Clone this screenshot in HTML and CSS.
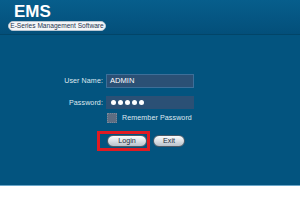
FILE: index.html
```html
<!DOCTYPE html>
<html>
<head>
<meta charset="utf-8">
<link rel="stylesheet" href="styles.css">
</head>
<body>
<div class="main">
  <div class="header">
    <div class="logo">EMS</div>
    <div class="pill">E-Series Management Software</div>
  </div>
  <div class="form">
    <label class="lbl">User Name:</label>
    <div class="field">ADMIN</div>
    <label class="lbl">Password:</label>
    <div class="field dots"><span></span><span></span><span></span><span></span><span></span></div>
  </div>
  <div class="remember"><span class="check"></span><span>Remember Password</span></div>
  <div class="buttons">
    <div class="hl"><div class="btn">Login</div></div>
    <div class="btn exit">Exit</div>
  </div>
</div>
</body>
</html>
```

FILE: styles.css
```css
html, body {
  margin: 0;
  padding: 0;
  background: #ffffff;
  font-family: "Liberation Sans", Arial, sans-serif;
}
.main {
  width: 300px;
  height: 185px;
  background: #03547f;
  border-bottom: 1px solid #6aa6c8;
}
.header {
  height: 35px;
  box-sizing: border-box;
  padding: 4px 0 0 8px;
  background: linear-gradient(#075e8c, #034f7a);
  border-bottom: 1px solid #024568;
}
.logo {
  color: #ffffff;
  font-weight: bold;
  font-size: 17px;
  line-height: 16px;
  margin-left: 6px;
  height: 16px;
}
.pill {
  margin-top: 1px;
  width: 98px;
  height: 10px;
  box-sizing: border-box;
  background: #f4f6f8;
  border: 1px solid #b8c6d2;
  border-radius: 5px;
  color: #1e3550;
  font-size: 6.6px;
  line-height: 8px;
  text-align: center;
  white-space: nowrap;
}
.form {
  display: grid;
  grid-template-columns: 103px 88px;
  grid-template-rows: 14px 13px;
  column-gap: 3px;
  row-gap: 8px;
  margin-top: 39px;
}
.lbl {
  color: #dfe8f0;
  font-size: 7.1px;
  letter-spacing: 0.1px;
  text-align: right;
  align-self: center;
}
.field {
  box-sizing: border-box;
  background: #2b5075;
  border: 1px solid #3d6f99;
  color: #ffffff;
  font-size: 7.6px;
  line-height: 12px;
  padding-left: 3px;
}
.dots {
  display: flex;
  align-items: center;
  gap: 2px;
  padding-left: 4px;
  border-color: #2b5075;
}
.dots span {
  width: 5px;
  height: 5px;
  border-radius: 50%;
  background: #ffffff;
}
.remember {
  display: flex;
  align-items: center;
  gap: 5px;
  height: 10px;
  margin: 4px 0 0 107px;
  color: #dfe8f0;
  font-size: 7.1px;
  letter-spacing: 0.1px;
  white-space: nowrap;
}
.check {
  width: 10px;
  height: 10px;
  box-sizing: border-box;
  background: #5d6d82;
  border: 1px dotted #7a889a;
}
.buttons {
  display: flex;
  align-items: center;
  gap: 3px;
  margin: 8px 0 0 97px;
}
.hl {
  border: 3px solid #e11b22;
  padding: 1px 0 1px 7px;
  width: 40px;
  height: 12px;
}
.btn {
  width: 40px;
  height: 12px;
  box-sizing: border-box;
  border: 1px solid #4a5a68;
  border-radius: 6px;
  background: linear-gradient(#fbfcfd, #d7dde3 55%, #b9c2cb);
  color: #1a2a38;
  font-size: 7.2px;
  line-height: 10px;
  text-align: center;
}
.exit {
  width: 32px;
}
```
